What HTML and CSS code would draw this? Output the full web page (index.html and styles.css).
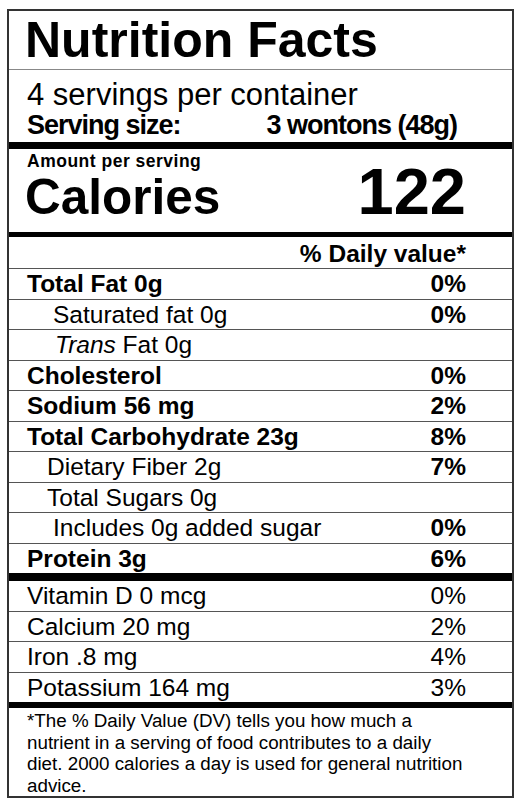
FILE: index.html
```html
<!DOCTYPE html>
<html lang="en">
<head>
    <meta charset="UTF-8">
    <meta name="viewport" content="width=device-width, initial-scale=1.0">
    <title>Nutrition Facts</title>
    <link rel="stylesheet" href="styles.css">
</head>
<body>

    <div class="label">
        <div class="label-title">Nutrition Facts</div>

        <!-- Servings -->
        <div class="servings">
            <div class="servings-count">4 servings per container</div>
            <div class="serving-size">
                <span>Serving size:</span>
                <span class="serving-amount">3 wontons (48g)</span>
            </div>
        </div>

        <div class="bar bar-thick"></div>

        <!-- Calories -->
        <div class="calories">
            <div class="amount-label">Amount per serving</div>
            <div class="calories-row">
                <span class="calories-label">Calories</span>
                <span class="calories-value">122</span>
            </div>
        </div>

        <div class="bar bar-medium"></div>

        <div class="dv-header">% Daily value*</div>

        <!-- Nutrients -->
        <div class="row bold"><span>Total Fat 0g</span><span>0%</span></div>
        <div class="row indent"><span>Saturated fat 0g</span><span class="dv">0%</span></div>
        <div class="row indent-trans"><span><i>Trans</i> Fat 0g</span><span></span></div>
        <div class="row bold"><span>Cholesterol</span><span>0%</span></div>
        <div class="row bold"><span>Sodium 56 mg</span><span>2%</span></div>
        <div class="row bold"><span>Total Carbohydrate 23g</span><span>8%</span></div>
        <div class="row indent-sm"><span>Dietary Fiber 2g</span><span class="dv">7%</span></div>
        <div class="row indent-sm"><span>Total Sugars 0g</span><span></span></div>
        <div class="row indent"><span>Includes 0g added sugar</span><span class="dv">0%</span></div>
        <div class="row bold"><span>Protein 3g</span><span>6%</span></div>

        <div class="bar bar-heavy"></div>

        <!-- Vitamins and minerals -->
        <div class="vitamins">
            <div class="row"><span>Vitamin D 0 mcg</span><span>0%</span></div>
            <div class="row"><span>Calcium 20 mg</span><span>2%</span></div>
            <div class="row"><span>Iron .8 mg</span><span>4%</span></div>
            <div class="row"><span>Potassium 164 mg</span><span>3%</span></div>
        </div>

        <div class="bar bar-foot"></div>

        <p class="footnote">*The % Daily Value (DV) tells you how much a nutrient in a serving of food contributes to a daily diet. 2000 calories a day is used for general nutrition advice.</p>
    </div>

</body>
</html>
```

FILE: styles.css
```css
body {
    margin: 9px 0 0 7px;                          /* Label sits near the top left */
    background-color: #fff;
    color: #000;
    font-family: "Liberation Sans", Arial, sans-serif;
}

/* Outer box */
.label {
    width: 507px;
    box-sizing: border-box;
    border: 2px solid #333;
}

.label-title {
    font-size: 50px;
    font-weight: bold;
    line-height: 58px;
    padding-left: 16px;
    border-bottom: 1px solid #888;
}

/* Servings */
.servings {
    height: 72px;
    box-sizing: border-box;
    padding: 9px 46px 0 18px;
}

.servings-count {
    font-size: 31px;
    line-height: 32px;
}

.serving-size {
    display: flex;
    justify-content: space-between;
    font-size: 27px;
    font-weight: bold;
    letter-spacing: -1px; /* Tight, like the printed label */
    line-height: 29px;
}

.serving-amount {
    margin-right: 9px;
}

/* Black rules */
.bar {
    background-color: #000;
}

.bar-thick { height: 7px; }
.bar-medium { height: 5px; }
.bar-heavy { height: 8px; }
.bar-foot { height: 6px; }

/* Calories */
.calories {
    height: 83px;
    box-sizing: border-box;
    padding: 3px 46px 0 16px;
}

.amount-label {
    font-size: 17.5px;
    font-weight: bold;
    letter-spacing: 0.5px;
    line-height: 18px;
    padding-left: 2px;
}

.calories-row {
    display: flex;
    justify-content: space-between;
    align-items: baseline;
    font-weight: bold;
    line-height: 44px;
}

.calories-label {
    font-size: 49.5px;
}

.calories-value {
    font-size: 65px;
}

.dv-header {
    height: 31px;
    box-sizing: border-box;
    padding: 2px 46px 0 18px;
    font-size: 24.5px;
    font-weight: bold;
    line-height: 29px;
    text-align: right;
}

/* Nutrient rows */
.row {
    display: flex;
    justify-content: space-between;
    border-top: 1px solid #555;
    padding: 0 46px 0 18px;
    font-size: 24.5px;
    line-height: 29.5px;
}

.row.bold {
    font-weight: bold;
}

.row .dv {
    font-weight: bold;
}

.row.indent { padding-left: 44px; }
.row.indent-trans { padding-left: 46px; }
.row.indent-sm { padding-left: 38px; }

.vitamins .row:first-child {
    border-top: none; /* Heavy bar already above */
}

.footnote {
    margin: 0;
    padding: 2px 46px 0 18px;
    font-size: 18.8px;
    line-height: 21.5px;
}
```
